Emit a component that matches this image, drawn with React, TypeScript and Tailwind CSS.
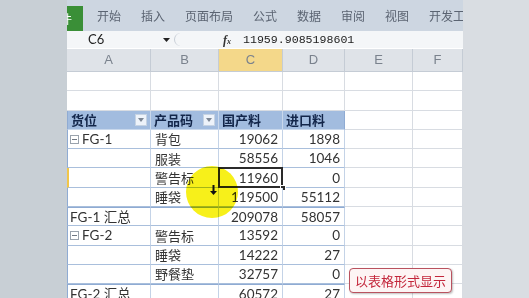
import React from "react";

type Row = {
  a?: string;
  b?: string;
  c?: string;
  d?: string;
  kind?: "empty" | "head" | "body" | "total";
  expander?: boolean;
  selected?: boolean;
};

const rows: Row[] = [
  { kind: "empty" },
  { kind: "empty" },
  { kind: "head", a: "货位", b: "产品码", c: "国产料", d: "进口料" },
  { kind: "body", a: "FG-1", expander: true, b: "背包", c: "19062", d: "1898" },
  { kind: "body", b: "服装", c: "58556", d: "1046" },
  { kind: "body", b: "警告标", c: "11960", d: "0", selected: true },
  { kind: "body", b: "睡袋", c: "119500", d: "55112" },
  { kind: "total", a: "FG-1 汇总", c: "209078", d: "58057" },
  { kind: "body", a: "FG-2", expander: true, b: "警告标", c: "13592", d: "0" },
  { kind: "body", b: "睡袋", c: "14222", d: "27" },
  { kind: "body", b: "野餐垫", c: "32757", d: "0" },
  { kind: "total", a: "FG-2 汇总", c: "60572", d: "27" },
];

const tabs = ["开始", "插入", "页面布局", "公式", "数据", "审阅", "视图", "开发工具"];

const gridCols = "grid shrink-0 grid-cols-[84px_68px_64px_62px_68px_50px]";
const cjk = "font-['Noto_Sans_CJK_SC',sans-serif]";
const num = "font-['Lato','Noto_Sans_CJK_SC',sans-serif]";

function FilterButton() {
  return (
    <span className="ml-auto mr-[3px] flex h-[12px] w-[12px] items-center justify-center border border-[#c6d3e3] bg-[#eef3fa]">
      <svg width="6" height="4" viewBox="0 0 6 4">
        <path d="M0 0h6L3 4z" fill="#7d8795" />
      </svg>
    </span>
  );
}

function Expander() {
  return (
    <span className="mr-[3px] flex h-[9px] w-[9px] items-center justify-center border border-[#9aa3ad] bg-white">
      <span className="h-px w-[5px] bg-[#6f7883]" />
    </span>
  );
}

function SheetRow({ row }: { row: Row }) {
  const plain = "h-[19.3px] border-b border-r border-[#d8dce2]";
  if (row.kind === "empty") {
    return (
      <div className={gridCols}>
        <div className={plain} />
        <div className={plain} />
        <div className={plain} />
        <div className={plain} />
        <div className={plain} />
        <div className={plain} />
      </div>
    );
  }

  if (row.kind === "head") {
    const head =
      "flex h-[19.3px] items-center border-b border-r border-[#c9d8ec] bg-[#a2bcdf] pl-[3px] text-[13px] font-bold text-[#13264a] " +
      cjk;
    return (
      <div className={gridCols}>
        <div className={head + " border-l border-l-[#8fabd3]"}>
          {row.a}
          <FilterButton />
        </div>
        <div className={head}>
          {row.b}
          <FilterButton />
        </div>
        <div className={head}>{row.c}</div>
        <div className={head + " border-r-[#8fabd3]"}>{row.d}</div>
        <div className={plain} />
        <div className={plain} />
      </div>
    );
  }

  const cell =
    "flex h-[19.3px] items-center border-b border-r border-b-[#a9bfdc] border-r-[#c4d3e7] bg-white text-[13.5px] text-[#333]";
  const topLine = row.kind === "total" ? " border-t border-t-[#8fabd3]" : "";

  return (
    <div className={gridCols}>
      <div
        className={
          cell +
          topLine +
          " pl-[2px] " +
          num +
          (row.selected ? " border-l-2 border-l-[#f1c64a]" : " border-l border-l-[#8fabd3]")
        }
      >
        {row.expander && <Expander />}
        {row.a}
      </div>
      <div className={cell + topLine + " pl-[4px] text-[13px] " + cjk}>{row.b}</div>
      <div className={cell + topLine + " relative justify-end pr-[4px] " + num}>
        {row.selected && (
          <>
            <span className="absolute inset-[-1px] border-2 border-[#2a2a2a]" />
            <span className="absolute bottom-[-4px] right-[-4px] h-[6px] w-[6px] border border-white bg-[#2a2a2a]" />
          </>
        )}
        <span className="relative">{row.c}</span>
      </div>
      <div className={cell + topLine + " justify-end border-r-[#8fabd3] pr-[4px] " + num}>{row.d}</div>
      <div className={plain} />
      <div className={plain} />
    </div>
  );
}

export default function App() {
  return (
    <div className="relative flex h-[298px] w-[529px] overflow-hidden bg-[#d3d9df]">
      {/* left backdrop */}
      <div className="h-full w-[67px] shrink-0 bg-[#c8cfd5]" />

      {/* excel window */}
      <div className="flex h-full w-[396px] shrink-0 flex-col overflow-hidden bg-white">
        {/* ribbon tabs */}
        <div className="flex h-[31px] shrink-0 items-end bg-[#cdd6e1]">
          <div className="relative h-[25px] w-[16px] shrink-0 overflow-hidden bg-[#3a8f37]">
            <span className={"absolute left-[-7px] top-[4px] text-[12px] text-white " + cjk}>件</span>
          </div>
          <div
            className={
              "ml-[14px] flex h-full shrink-0 items-center gap-[20px] text-[12px] text-[#5b6472] " + cjk
            }
          >
            {tabs.map((t) => (
              <span key={t} className="whitespace-nowrap">
                {t}
              </span>
            ))}
          </div>
        </div>

        {/* formula bar */}
        <div className="flex h-[17px] shrink-0 items-center bg-[#f4f6f8]">
          <span className={"ml-[21px] w-[70px] text-[13px] text-[#222] " + num}>C6</span>
          <svg width="7" height="4" viewBox="0 0 7 4" className="ml-[5px]">
            <path d="M0 0h7L3.5 4z" fill="#222" />
          </svg>
          <span className="ml-[4px] h-[13px] w-[9px] rounded-l-full border-l border-[#c5ccd4]" />
          <span className="ml-[40px] font-['Liberation_Serif',serif] text-[12px] font-bold italic text-[#333]">
            f<span className="text-[8px]">x</span>
          </span>
          <span className="ml-[12px] font-['Liberation_Mono',monospace] text-[11.6px] text-[#222]">
            11959.9085198601
          </span>
        </div>

        {/* column headers */}
        <div className={gridCols + " mt-[1px] h-[23px] border-b border-[#c5ccd5]"}>
          {["A", "B", "C", "D", "E", "F"].map((c) => (
            <div
              key={c}
              className={
                "flex items-center justify-center border-r border-[#c5ccd5] font-['Liberation_Sans',sans-serif] text-[13px] text-[#7a828d] " +
                (c === "C" ? "bg-[#f4d88a]" : "bg-[#dfe3e8]")
              }
            >
              {c}
            </div>
          ))}
        </div>

        {/* sheet rows */}
        <div className="flex shrink-0 flex-col">
          {rows.map((r, i) => (
            <SheetRow key={i} row={r} />
          ))}
        </div>
      </div>

      {/* right backdrop */}
      <div className="h-full flex-1 bg-[#d9dde2]" />

      {/* click highlight */}
      <div className="pointer-events-none absolute left-[186px] top-[166px] h-[52px] w-[52px] rounded-full bg-[#f7f01a] mix-blend-multiply" />
      <svg
        className="pointer-events-none absolute left-[210px] top-[185px]"
        width="7"
        height="10"
        viewBox="0 0 7 10"
      >
        <path d="M2.5 0h2v6h2.5L3.5 10 0 6h2.5z" fill="#111" />
      </svg>

      {/* tooltip */}
      <div
        className={
          "absolute left-[349px] top-[268px] flex h-[25px] w-[103px] items-center justify-center rounded-[4px] border border-[#b9525f] bg-[#fdf4f4] text-[13px] text-[#c3263b] shadow-[1px_1px_2px_rgba(0,0,0,0.25)] " +
          cjk
        }
      >
        以表格形式显示
      </div>
    </div>
  );
}
